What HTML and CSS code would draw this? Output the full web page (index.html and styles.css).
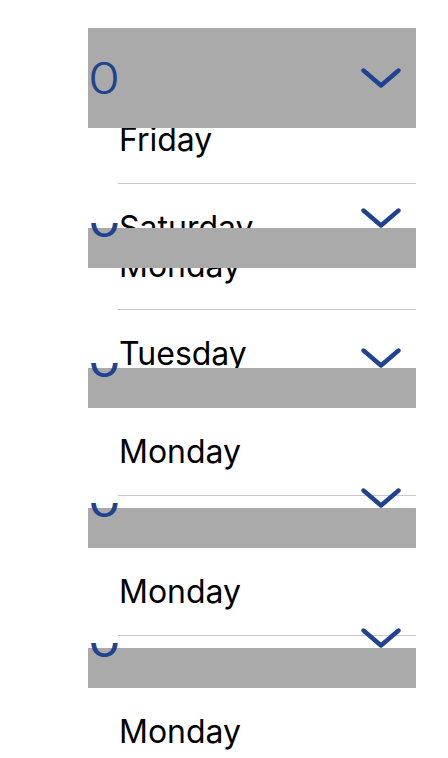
FILE: index.html
```html
<!doctype html>

<html lang="en">
<head>
    <meta charset="utf-8">
    <title>Schedule</title>
    <link rel="stylesheet" href="styles.css">
</head>

<body>
    <div class="table">

        <div class="section-head first">
            <span class="count">0</span>
            <svg class="chevron" viewBox="0 0 40 20"><path d="M2.5 2.5 L20 17.5 L37.5 2.5"/></svg>
        </div>
        <div class="cell up-32">Friday</div>
        <div class="cell last">Saturday</div>

        <div class="section-head up-44">
            <span class="count-peek"><span class="count">0</span></span>
            <svg class="chevron" viewBox="0 0 40 20"><path d="M2.5 2.5 L20 17.5 L37.5 2.5"/></svg>
        </div>
        <div class="cell up-46">Monday</div>
        <div class="cell last">Tuesday</div>

        <div class="section-head up-30">
            <span class="count-peek"><span class="count">0</span></span>
            <svg class="chevron" viewBox="0 0 40 20"><path d="M2.5 2.5 L20 17.5 L37.5 2.5"/></svg>
        </div>
        <div class="cell">Monday</div>

        <div class="section-head down-12">
            <span class="count-peek"><span class="count">0</span></span>
            <svg class="chevron" viewBox="0 0 40 20"><path d="M2.5 2.5 L20 17.5 L37.5 2.5"/></svg>
        </div>
        <div class="cell">Monday</div>

        <div class="section-head down-12">
            <span class="count-peek"><span class="count">0</span></span>
            <svg class="chevron" viewBox="0 0 40 20"><path d="M2.5 2.5 L20 17.5 L37.5 2.5"/></svg>
        </div>
        <div class="cell">Monday</div>

    </div>
</body>
</html>
```

FILE: styles.css
```css
body {
    margin: 0;
    background-color: #ffffff;
    font-family: Inter, "Noto Sans", sans-serif;
    overflow: hidden;
}

.table {
    width: 328px;
    margin-left: 88px;
    padding-top: 28px;
}

/* section headers sit over the rows */
.section-head {
    position: relative;
    height: 40px;
    background-color: #aaaaaa;
}

.section-head.first {
    height: 100px;
    display: flex;
    align-items: center;
    justify-content: space-between;
}

.count {
    display: block;
    font-size: 44px;
    font-weight: 300;
    line-height: 44px;
    color: #21428f;
    transform: scaleX(1.18);
    transform-origin: 0 50%;
}

.count-peek {
    position: absolute;
    left: 0;
    top: -5px;
    width: 30px;
    height: 20px;
    overflow: hidden;
}

.count-peek .count {
    margin-top: -24px;
    font-weight: 400;
}

.chevron {
    position: absolute;
    top: -20px;
    right: 15px;
    width: 40px;
    height: 20px;
    fill: none;
    stroke: #1f4391;
    stroke-width: 4.4;
    stroke-linecap: round;
    stroke-linejoin: round;
}

.section-head.first .chevron {
    position: static;
    margin-right: 15px;
}

.cell {
    height: 87px;
    margin-left: 30px;
    padding-left: 1px;
    display: flex;
    align-items: center;
    font-size: 32px;
    line-height: 33px;
    color: #000000;
    border-bottom: 1px solid #c8c7cc;
}

.cell.last {
    border-bottom-color: transparent;
}

.up-32 { margin-top: -32px; }
.up-44 { margin-top: -44px; }
.up-46 { margin-top: -46px; }
.up-30 { margin-top: -30px; }
.down-12 { margin-top: 12px; }
```
